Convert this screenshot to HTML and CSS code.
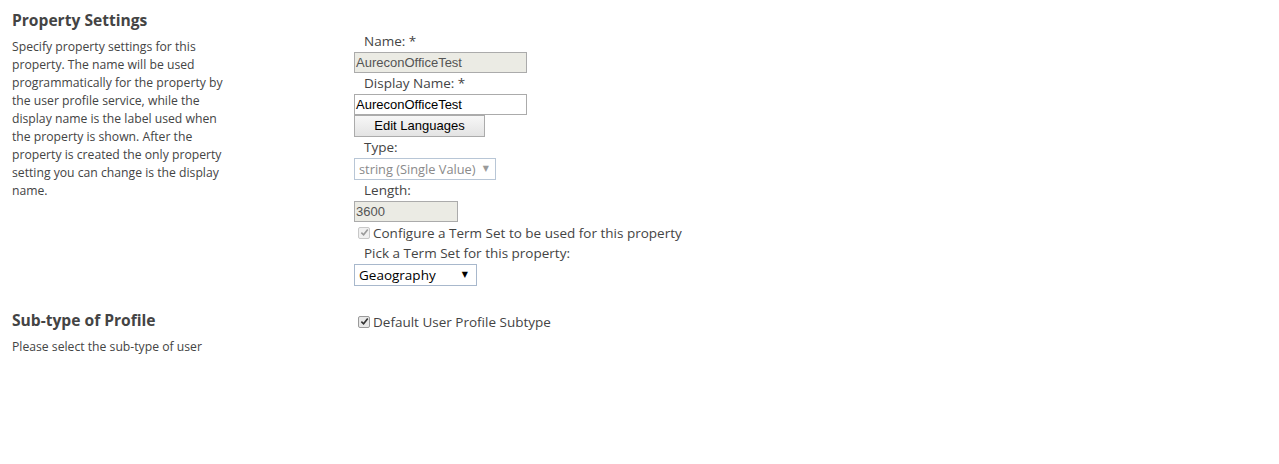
FILE: index.html
```html
<!DOCTYPE html>
<html>
<head>
<meta charset="utf-8">
<link rel="stylesheet" href="styles.css">
</head>
<body>
<div class="page">
  <section class="section section-props">
    <div class="desc-col">
      <h3 class="sec-title">Property Settings</h3>
      <p class="sec-desc">Specify property settings for this property. The name will be used programmatically for the property by the user profile service, while the display name is the label used when the property is shown. After the property is created the only property setting you can change is the display name.</p>
    </div>
    <div class="field-col">
      <div class="label">Name: *</div>
      <div class="input input-disabled input-wide">AureconOfficeTest</div>
      <div class="label">Display Name: *</div>
      <div class="input input-wide">AureconOfficeTest</div>
      <div class="btn">Edit Languages</div>
      <div class="label">Type:</div>
      <div class="select select-disabled">string (Single Value)<span class="arrow">&#9660;</span></div>
      <div class="label">Length:</div>
      <div class="input input-disabled input-short">3600</div>
      <div class="check-row">
        <span class="checkbox checkbox-disabled"><svg viewBox="0 0 10 10" width="9" height="9"><path d="M1.5 5.2 L4 7.6 L8.6 1.8" fill="none" stroke="#9a9a9a" stroke-width="1.8"/></svg></span>
        <span class="check-label">Configure a Term Set to be used for this property</span>
      </div>
      <div class="label">Pick a Term Set for this property:</div>
      <div class="select select-term">Geaography<span class="arrow arrow-dark">&#9660;</span></div>
    </div>
  </section>
  <section class="section section-sub">
    <div class="desc-col">
      <h3 class="sec-title">Sub-type of Profile</h3>
      <p class="sec-desc">Please select the sub-type of user</p>
    </div>
    <div class="field-col field-col-sub">
      <div class="check-row">
        <span class="checkbox"><svg viewBox="0 0 10 10" width="9" height="9"><path d="M1.5 5.2 L4 7.6 L8.6 1.8" fill="none" stroke="#333" stroke-width="1.8"/></svg></span>
        <span class="check-label">Default User Profile Subtype</span>
      </div>
    </div>
  </section>
</div>
</body>
</html>
```
FILE: styles.css
```css
html, body {
  margin: 0;
  padding: 0;
  background: #fff;
}
body {
  font-family: "Open Sans", "Noto Sans", sans-serif;
  color: #444;
}
.page {
  padding: 8px 0 0 12px;
}
.section {
  display: grid;
  grid-template-columns: 342px auto;
}
.section-sub {
  margin-top: 22px;
}
.desc-col {
  width: 216px;
}
.sec-title {
  margin: 0;
  font-size: 15.6px;
  font-weight: 700;
  line-height: 24px;
  color: #444;
}
.sec-desc {
  margin: 6px 0 0 0;
  font-size: 12.2px;
  line-height: 18px;
  color: #444;
}
.section-sub .sec-desc {
  margin-top: 6px;
}
.field-col {
  display: flex;
  flex-direction: column;
  align-items: flex-start;
  padding-top: 23px;
}
.field-col-sub {
  padding-top: 3px;
}
.label {
  font-size: 13.5px;
  line-height: 18px;
  padding: 1px 0 2px 10px;
  color: #444;
}
.input {
  box-sizing: border-box;
  height: 21px;
  border: 1px solid #ababab;
  background: #fff;
  font-family: "Liberation Sans", Arial, sans-serif;
  font-size: 13px;
  line-height: 19px;
  padding: 0 1px;
  color: #000;
}
.input-disabled {
  background: #ebebe4;
  color: #545454;
}
.input-wide {
  width: 173px;
}
.input-short {
  width: 104px;
}
.btn {
  box-sizing: border-box;
  width: 131px;
  height: 22px;
  border: 1px solid #ababab;
  background: linear-gradient(#f7f7f7, #e3e3e3);
  font-family: "Liberation Sans", Arial, sans-serif;
  font-size: 13px;
  line-height: 20px;
  text-align: center;
  color: #000;
}
.select {
  box-sizing: border-box;
  height: 22px;
  border: 1px solid #a8b8cc;
  background: #fff;
  font-size: 13.5px;
  line-height: 20px;
  padding: 0 0 0 4px;
  display: flex;
  align-items: center;
  justify-content: space-between;
}
.select-disabled {
  width: 142px;
  color: #8a8a8a;
  border-color: #b8c6d6;
  padding-right: 6px;
  font-size: 12.8px;
}
.select-term {
  width: 123px;
  color: #000;
  padding-right: 8px;
}
.arrow {
  font-size: 8px;
  color: #9a9a9a;
  font-family: "DejaVu Sans", sans-serif;
}
.arrow-dark {
  color: #000;
}
.check-row {
  display: flex;
  align-items: center;
  height: 21px;
  padding-left: 4px;
}
.checkbox {
  box-sizing: border-box;
  width: 12px;
  height: 12px;
  border: 1px solid #9a9a9a;
  border-radius: 2px;
  background: #e8e8e8;
  display: flex;
  align-items: center;
  justify-content: center;
  margin-right: 3px;
}
.checkbox-disabled {
  border-color: #c8c8c8;
  background: #f0f0f0;
}
.check-label {
  font-size: 13.5px;
  line-height: 18px;
  color: #444;
}
```
